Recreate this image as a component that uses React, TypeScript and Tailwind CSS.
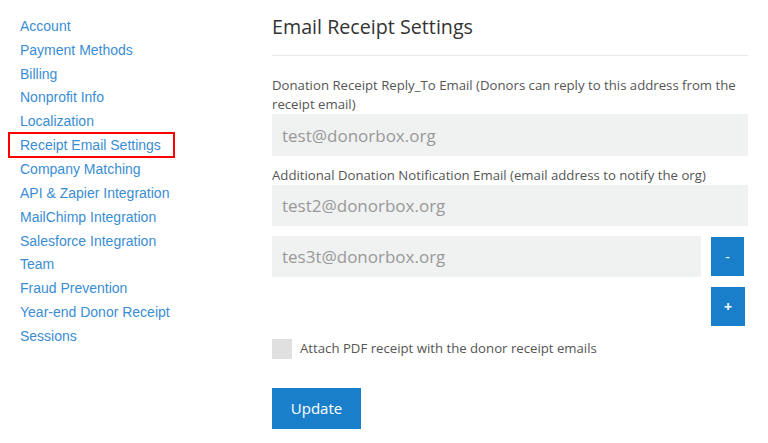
import { useState } from 'react';

const links = [
  'Account',
  'Payment Methods',
  'Billing',
  'Nonprofit Info',
  'Localization',
  'Receipt Email Settings',
  'Company Matching',
  'API & Zapier Integration',
  'MailChimp Integration',
  'Salesforce Integration',
  'Team',
  'Fraud Prevention',
  'Year-end Donor Receipt',
  'Sessions',
];

export default function App() {
  const [attach, setAttach] = useState(false);

  return (
    <div className="flex w-[768px] h-[443px] bg-white overflow-hidden">
      <aside className="w-[272px] shrink-0 pt-[14px] pl-[8px] font-['Liberation_Sans',Arial,sans-serif]">
        <ul className="flex flex-col">
          {links.map((link) => (
            <li key={link} className="h-[23.85px] flex items-center">
              <a
                href="#"
                className={`text-[14px] text-[#3a8dd4] leading-none pl-[10px] pr-[11px] py-[4px] ${
                  link === 'Receipt Email Settings' ? 'border-2 border-[#ff0000] w-[167px]' : 'border-2 border-transparent'
                }`}
              >
                {link}
              </a>
            </li>
          ))}
        </ul>
      </aside>

      <main className="w-[476px] shrink-0 font-['Open_Sans',sans-serif] text-[#555]">
        <h1 className="text-[19.7px] text-[#333] pt-[13px] pb-[14px] border-b border-[#e8e8e8] leading-[28px]">
          Email Receipt Settings
        </h1>

        <label className="block text-[13.2px] leading-[19px] mt-[20px]">
          Donation Receipt Reply_To Email (Donors can reply to this address from the receipt email)
        </label>
        <input
          defaultValue="test@donorbox.org"
          className="block w-full h-[42px] bg-[#f0f1f1] px-[10px] text-[17px] text-[#999] outline-none"
        />

        <label className="block text-[13.2px] leading-[19px] mt-[10px]">
          Additional Donation Notification Email (email address to notify the org)
        </label>
        <input
          defaultValue="test2@donorbox.org"
          className="block w-full h-[41px] bg-[#f0f1f1] px-[10px] text-[17px] text-[#999] outline-none"
        />

        <div className="flex items-start mt-[10px]">
          <input
            defaultValue="tes3t@donorbox.org"
            className="block w-[429px] h-[41px] bg-[#f0f1f1] px-[10px] text-[17px] text-[#999] outline-none"
          />
          <button className="ml-[10px] mt-[1px] w-[33px] h-[39px] bg-[#1a7fca] text-white text-[14px]">-</button>
        </div>
        <div className="flex justify-end pr-[3px] mt-[10px]">
          <button className="w-[34px] h-[39px] bg-[#1a7fca] text-white text-[14px] font-bold">+</button>
        </div>

        <label className="flex items-center h-[20px] mt-[13px] gap-[8px] cursor-pointer">
          <span
            onClick={() => setAttach(!attach)}
            className="w-[20px] h-[20px] bg-[#e0e0e0] flex items-center justify-center text-[12px]"
          >
            {attach ? '✓' : ''}
          </span>
          <span className="text-[13.2px] text-[#555]">Attach PDF receipt with the donor receipt emails</span>
        </label>

        <button className="mt-[29px] w-[89px] h-[41px] bg-[#1a7fca] text-white text-[15px]">Update</button>
      </main>
    </div>
  );
}
